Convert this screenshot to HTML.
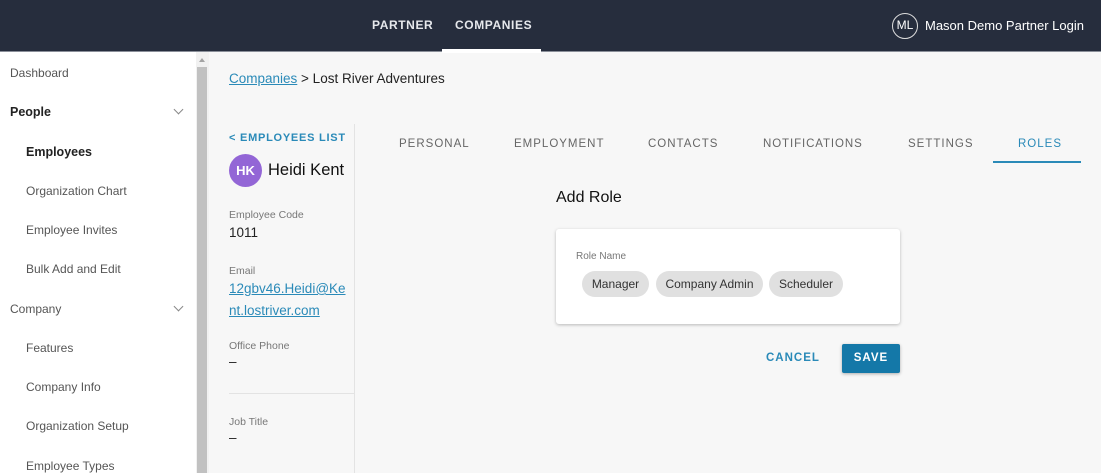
<!DOCTYPE html>
<html><head><style>
*{margin:0;padding:0;box-sizing:border-box}
body{width:1101px;height:473px;overflow:hidden;font-family:"Liberation Sans",sans-serif;background:#f7f7f7;position:relative}
.a{position:absolute;white-space:nowrap}
#hdr{left:0;top:0;width:1101px;height:52px;background:#262d3d;border-bottom:1px solid #8a8f99}
.nav{color:#e6e8ec;font-weight:bold;font-size:12px;letter-spacing:.6px;top:18px}
#side{left:0;top:52px;width:196px;height:421px;background:#fff}
.s{font-size:12px;color:#555}
.s2{font-size:12px;color:#555;left:26px}
.chev{width:7px;height:7px;border-right:1.3px solid #888;border-bottom:1.3px solid #888;transform:rotate(45deg)}
.lbl{font-size:10.5px;color:#777;left:229px}
.val{font-size:13.5px;color:#222;left:229px}
.tab{font-size:11.5px;letter-spacing:1px;color:#666;top:137px}
.chip{top:271px;height:26px;border-radius:13px;background:#e0e0e0;font-size:12px;color:#333;line-height:26px;text-align:center}
</style></head><body>
<div id="hdr" class="a"></div>
<div class="a nav" style="left:372px">PARTNER</div>
<div class="a nav" style="left:455px">COMPANIES</div>
<div class="a" style="left:442px;top:49px;width:99px;height:4px;background:#fff"></div>
<div class="a" style="left:892px;top:13px;width:26px;height:26px;border:1.3px solid #ddd;border-radius:50%;color:#fff;font-size:12px;text-align:center;line-height:23px">ML</div>
<div class="a" style="left:925px;top:18px;color:#fff;font-size:13px">Mason Demo Partner Login</div>

<div id="side" class="a"></div>
<div class="a s" style="left:10px;top:66px">Dashboard</div>
<div class="a" style="left:10px;top:105px;font-size:12.5px;font-weight:bold;color:#222">People</div>
<div class="a chev" style="left:175px;top:106px"></div>
<div class="a" style="left:26px;top:145px;font-size:12.5px;font-weight:bold;color:#222">Employees</div>
<div class="a s2" style="top:184px">Organization Chart</div>
<div class="a s2" style="top:223px">Employee Invites</div>
<div class="a s2" style="top:262px">Bulk Add and Edit</div>
<div class="a s" style="left:10px;top:302px">Company</div>
<div class="a chev" style="left:175px;top:303px"></div>
<div class="a s2" style="top:341px">Features</div>
<div class="a s2" style="top:380px">Company Info</div>
<div class="a s2" style="top:419px">Organization Setup</div>
<div class="a s2" style="top:459px">Employee Types</div>
<div class="a" style="left:196px;top:52px;width:13px;height:421px;background:#f1f1f1"></div>
<div class="a" style="left:197px;top:67px;width:10px;height:406px;background:#c1c1c1"></div>
<div class="a" style="left:199px;top:58px;width:0;height:0;border-left:3px solid transparent;border-right:3px solid transparent;border-bottom:4px solid #a3a3a3"></div>

<div class="a" style="left:229px;top:71px;font-size:13.5px;color:#222"><span style="color:#2a8ab8;text-decoration:underline">Companies</span> &gt; Lost River Adventures</div>

<div class="a" style="left:229px;top:132px;font-size:11px;font-weight:bold;letter-spacing:.75px;color:#2a8ab8">&lt; EMPLOYEES LIST</div>
<div class="a" style="left:229px;top:154px;width:33px;height:33px;border-radius:50%;background:#9366d6;color:#fff;font-weight:bold;font-size:13px;line-height:33px;text-align:center">HK</div>
<div class="a" style="left:268px;top:161px;font-size:16.5px;color:#111">Heidi Kent</div>
<div class="a lbl" style="top:209px">Employee Code</div>
<div class="a val" style="top:225px">1011</div>
<div class="a lbl" style="top:265px">Email</div>
<div class="a" style="left:229px;top:278px;font-size:13.5px;line-height:22px;color:#2a8ab8;text-decoration:underline">12gbv46.Heidi@Ke<br>nt.lostriver.com</div>
<div class="a lbl" style="top:340px">Office Phone</div>
<div class="a val" style="top:354px">–</div>
<div class="a" style="left:229px;top:393px;width:125px;height:1px;background:#e3e3e3"></div>
<div class="a lbl" style="top:416px">Job Title</div>
<div class="a val" style="top:430px">–</div>
<div class="a" style="left:354px;top:124px;width:1px;height:349px;background:#e3e3e3"></div>

<div class="a tab" style="left:399px;top:138px">PERSONAL</div>
<div class="a tab" style="left:514px;top:138px">EMPLOYMENT</div>
<div class="a tab" style="left:648px;top:138px">CONTACTS</div>
<div class="a tab" style="left:763px;top:138px;letter-spacing:.9px">NOTIFICATIONS</div>
<div class="a tab" style="left:908px;top:138px">SETTINGS</div>
<div class="a tab" style="left:1018px;top:138px;color:#2a8ab8">ROLES</div>
<div class="a" style="left:993px;top:161px;width:88px;height:2px;background:#2a8ab8"></div>

<div class="a" style="left:556px;top:189px;font-size:16px;color:#111">Add Role</div>
<div class="a" style="left:556px;top:229px;width:344px;height:95px;background:#fff;border-radius:3px;box-shadow:0 1px 3px rgba(0,0,0,.25)"></div>
<div class="a" style="left:576px;top:251px;font-size:10px;color:#777">Role Name</div>
<div class="a chip" style="left:582px;width:67px">Manager</div>
<div class="a chip" style="left:656px;width:107px">Company Admin</div>
<div class="a chip" style="left:769px;width:74px">Scheduler</div>
<div class="a" style="left:766px;top:352px;font-size:11.5px;font-weight:bold;letter-spacing:1px;color:#2a8ab8">CANCEL</div>
<div class="a" style="left:842px;top:344px;width:58px;height:29px;background:#1478a8;border-radius:2px;box-shadow:0 1px 3px rgba(0,0,0,.3);color:#fff;font-size:11.5px;font-weight:bold;letter-spacing:1px;text-align:center;line-height:29px">SAVE</div>
</body></html>
